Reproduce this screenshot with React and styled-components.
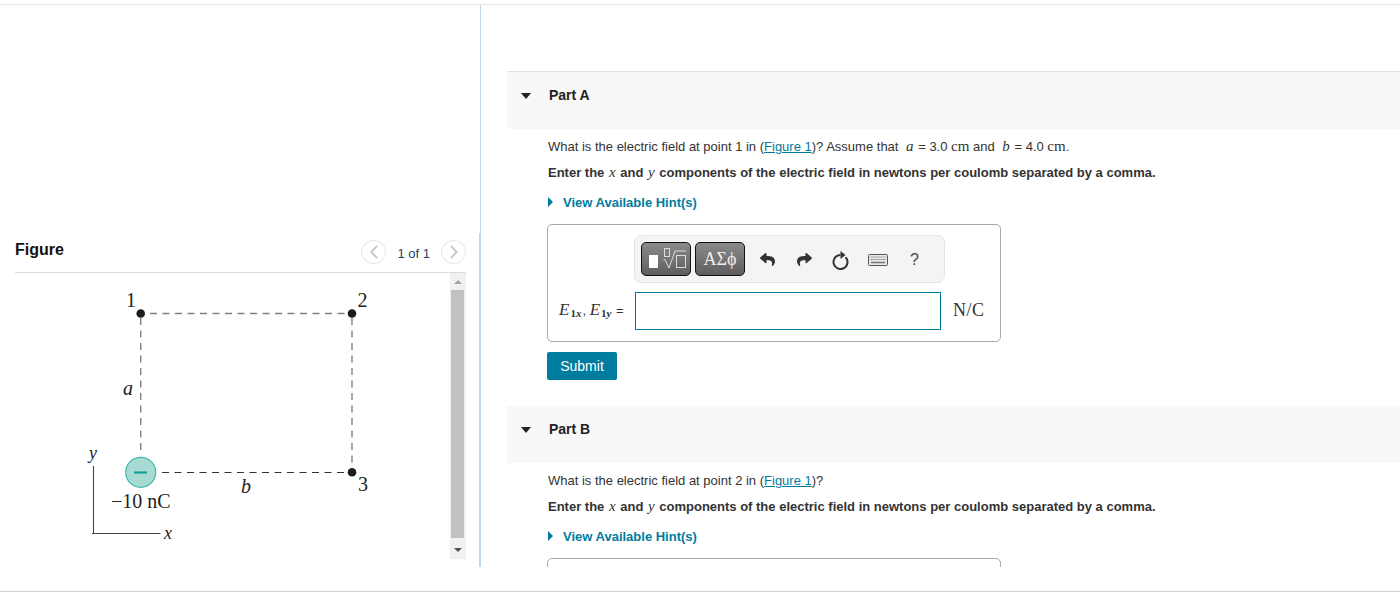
import React from 'react'
import styled, { createGlobalStyle } from 'styled-components'
import { FaReply, FaShare } from 'react-icons/fa'
import { FiChevronLeft, FiChevronRight } from 'react-icons/fi'

const GlobalStyle = createGlobalStyle`
	html, body {
		margin: 0;
		padding: 0;
		background: #fff;
		font-family: "Liberation Sans", Arial, sans-serif;
		color: #333;
	}
`
const Page = styled.div`
	width: 1400px;
	height: 595px;
	box-sizing: border-box;
	padding-top: 4px;
	overflow: hidden;
`
const Frame = styled.div`
	height: 588px;
	box-sizing: border-box;
	border-top: 1px solid #e6e6e6;
	border-bottom: 1px solid #d0d0d0;
`
const Columns = styled.div`
	display: flex;
	height: 562px;
`
const FigurePane = styled.aside`
	width: 481px;
	box-sizing: border-box;
	border-right: 1px solid #c3d7ec;
	display: flex;
	flex-direction: column;
	justify-content: flex-end;
`
const FigureCard = styled.div`
	box-sizing: border-box;
	border-right: 1px solid #c3d7ec;
	padding: 0 13px 8px 15px;
`
const FigureHeader = styled.div`
	height: 39px;
	display: flex;
	align-items: flex-start;
	border-bottom: 1px solid #dcdcdc;
`
const FigureTitle = styled.h2`
	margin: 7px 0 0;
	flex: 1;
	font-size: 16px;
	line-height: 20px;
	font-weight: 700;
	color: #111;
`
const Pager = styled.div`
	display: flex;
	align-items: center;
	gap: 11px;
	margin-top: 7px;
`
const PagerButton = styled.span`
	width: 23px;
	height: 22px;
	border: 1px solid #e8e8e8;
	border-radius: 50%;
	display: flex;
	align-items: center;
	justify-content: center;
	color: #c8c8c8;
	font-size: 22px;
`
const PagerText = styled.span`
	padding-top: 2px;
	font-size: 13px;
	color: #27405c;
`
const FigureBody = styled.div`
	height: 286px;
	display: flex;
`
const FigureCanvas = styled.div`
	flex: 1;
	min-width: 0;
`
const Scrollbar = styled.div`
	width: 16px;
	background: #f1f1f1;
	display: flex;
	flex-direction: column;
	align-items: center;
	padding-top: 7px;
	box-sizing: border-box;
`
const ScrollThumb = styled.div`
	align-self: flex-start;
	width: 13px;
	height: 248px;
	margin: 6px 0 10px 1px;
	background: #c1c1c1;
`
const ScrollArrow = styled.span`
	width: 0;
	height: 0;
	border-left: 4px solid transparent;
	border-right: 4px solid transparent;
	${p => (p.$up ? 'border-bottom: 4px solid #a3a3a3;' : 'border-top: 4px solid #505050;')}
`
const QuestionPane = styled.main`
	flex: 1;
	min-width: 0;
	height: 562px;
	overflow: hidden;
	padding: 66px 0 0 26px;
	box-sizing: border-box;
`
const PartHeader = styled.div`
	height: ${p => (p.$first ? '58px' : '57px')};
	box-sizing: border-box;
	background: #f8f8f8;
	${p => p.$first && 'border-top: 1px solid #e2e2e2;'}
	display: flex;
	align-items: flex-start;
	padding: 14px 0 0 14px;
`
const Caret = styled.span`
	width: 0;
	height: 0;
	margin: 7px 18px 0 0;
	border-left: 5.5px solid transparent;
	border-right: 5.5px solid transparent;
	border-top: 6px solid #222;
`
const PartTitle = styled.h3`
	margin: 0;
	font-size: 14px;
	line-height: 18px;
	font-weight: 700;
	color: #222;
`
const PartBody = styled.section`
	padding: 9px 0 26px 40px;
`
const Prompt = styled.p`
	margin: 0 0 8px;
	padding-left: 1px;
	font-size: 13px;
	line-height: 18px;
	height: 18px;
	font-weight: ${p => (p.$bold ? 700 : 400)};
	color: #333;
	white-space: nowrap;
`
const MathVar = styled.i`
	font-family: "Liberation Serif", serif;
	font-size: 15px;
	font-weight: 400;
	line-height: 0;
	padding: 0 1px;
	margin-left: ${p => p.$lead || 0}px;
`
const MathUnit = styled.span`
	font-family: "Liberation Serif", serif;
	font-size: 15px;
	line-height: 0;
`
const FigureLink = styled.a`
	color: #007c9e;
	text-decoration: underline;
`
const Hint = styled.div`
	display: flex;
	align-items: center;
	gap: 10px;
	margin: 11px 0 13px;
	padding-left: 1px;
	height: 18px;
	font-size: 13px;
	font-weight: 700;
	color: #007c9e;
`
const HintArrow = styled.span`
	width: 0;
	height: 0;
	border-top: 5px solid transparent;
	border-bottom: 5px solid transparent;
	border-left: 5px solid #007c9e;
`
const AnswerBox = styled.div`
	width: 454px;
	height: ${p => (p.$clipped ? '60px' : '118px')};
	box-sizing: border-box;
	border: 1px solid #a8a8a8;
	border-radius: 5px;
	padding: 10px 0 0 11px;
`
const ToolbarRow = styled.div`
	padding-left: 75px;
`
const Toolbar = styled.div`
	width: 311px;
	height: 48px;
	box-sizing: border-box;
	background: #f4f4f4;
	border: 1px solid #e4e4e4;
	border-radius: 7px;
	display: flex;
	align-items: center;
	padding-left: 6px;
`
const TemplateButton = styled.span`
	width: 50px;
	height: 34px;
	box-sizing: border-box;
	margin-right: 4px;
	border: 1px solid #111;
	border-radius: 5px;
	background: linear-gradient(#8a8a8a, #5e5e5e);
	color: #eee;
	display: flex;
	align-items: center;
	justify-content: center;
	font-family: "Liberation Serif", serif;
	font-size: 18px;
`
const ToolIcon = styled.span`
	width: ${p => p.$width || 37}px;
	padding-top: 1px;
	display: flex;
	align-items: center;
	justify-content: center;
	color: #333;
	font-size: 15px;
`
const HelpMark = styled(ToolIcon)`
	font-size: 16px;
	color: #444;
`
const InputRow = styled.div`
	display: flex;
	align-items: center;
	margin-top: 9px;
`
const InputLabel = styled.span`
	width: 76px;
	height: 20px;
	line-height: 20px;
	margin-bottom: 3px;
	box-sizing: border-box;
	font-size: 13px;
	color: #333;
	white-space: nowrap;
`
const LabelVar = styled.i`
	font-family: "Liberation Serif", serif;
	font-size: 17px;
`
const LabelSub = styled.span`
	font-family: "Liberation Serif", serif;
	font-size: 11px;
	font-weight: 700;
	margin: 0 1px;
	vertical-align: -2px;
	line-height: 0;
`
const AnswerInput = styled.div`
	width: 306px;
	height: 38px;
	box-sizing: border-box;
	border: 1px solid #007c9e;
`
const Units = styled.span`
	margin: 0 0 2px 12px;
	font-family: "Liberation Serif", serif;
	font-size: 18px;
	letter-spacing: 0.5px;
	color: #333;
`
const SubmitButton = styled.button`
	display: block;
	width: 70px;
	height: 28px;
	margin-top: 10px;
	padding: 0;
	border: 0;
	border-radius: 2px;
	background: #007c9e;
	color: #fff;
	font-family: inherit;
	font-size: 14px;
`

function FigureDrawing() {
	const labelFont = { fontFamily: '"Liberation Serif", serif', fill: '#222' }
	return (
		<svg width='435' height='286' viewBox='15 273 435 286'>
			<g stroke='#808080' strokeWidth='1.4' strokeDasharray='7 5.5' fill='none'>
				<path d='M150 313.5H346' />
				<path d='M140.7 318V451' />
				<path d='M352 318V467' />
				<path d='M162 472.5H346' strokeWidth='1' stroke='#333' />
			</g>
			<circle cx='140.7' cy='313.5' r='4.3' fill='#1c1c1c' />
			<circle cx='352' cy='313.5' r='4.3' fill='#1c1c1c' />
			<circle cx='352' cy='472.3' r='4.3' fill='#1c1c1c' />
			<circle cx='140.7' cy='472.3' r='15' fill='#a6dad2' stroke='#3fb8ac' strokeWidth='1.2' />
			<path d='M134 472.5H147' stroke='#17a096' strokeWidth='2.2' />
			<path d='M93.5 466V534M92 533.5H160.5' stroke='#444' strokeWidth='1.1' fill='none' />
			<g style={labelFont} fontSize='20'>
				<text x='126' y='307'>1</text>
				<text x='357.5' y='307'>2</text>
				<text x='358' y='491'>3</text>
				<text x='123' y='395' fontStyle='italic'>a</text>
				<text x='241' y='493' fontStyle='italic'>b</text>
				<text x='89' y='459' fontStyle='italic' fontSize='18'>y</text>
				<text x='164' y='539' fontStyle='italic' fontSize='18'>x</text>
				<text x='111' y='508'>−10 nC</text>
			</g>
		</svg>
	)
}

function RootButtonGlyph() {
	return (
		<svg width='48' height='32' viewBox='1 1 48 32' fill='none' stroke='#ddd'>
			<rect x='8' y='13' width='9' height='13' fill='#fff' stroke='none' />
			<rect x='23.5' y='6.5' width='5' height='8' />
			<path d='M22.5 18l1.5-0.5 4 8.5 6-17h11' />
			<rect x='35.5' y='13.5' width='9' height='12' />
		</svg>
	)
}

function ResetIcon() {
	return (
		<svg width='18' height='20' viewBox='0 0 18 20' fill='none'>
			<path d='M13.6 7.2A7 7 0 1 1 8.5 5' stroke='#333' strokeWidth='2' />
			<path d='M8.5 1L8.5 9L13.5 5z' fill='#333' />
		</svg>
	)
}

function KeyboardIcon() {
	return (
		<svg width='20' height='12' viewBox='0 0 20 12'>
			<rect x='0.5' y='0.5' width='19' height='11' rx='1' fill='#e8e8e8' stroke='#555' />
			<path d='M2.5 3h15M2.5 5.5h15' stroke='#666' strokeDasharray='1 1' />
			<path d='M3 8.5h14' stroke='#777' strokeWidth='1.5' />
		</svg>
	)
}

function MathToolbar() {
	return (
		<Toolbar>
			<TemplateButton>
				<RootButtonGlyph />
			</TemplateButton>
			<TemplateButton>ΑΣϕ</TemplateButton>
			<ToolIcon>
				<FaReply />
			</ToolIcon>
			<ToolIcon>
				<FaShare />
			</ToolIcon>
			<ToolIcon $width={36}>
				<ResetIcon />
			</ToolIcon>
			<ToolIcon>
				<KeyboardIcon />
			</ToolIcon>
			<HelpMark>?</HelpMark>
		</Toolbar>
	)
}

function Instruction() {
	return (
		<Prompt $bold>
			Enter the <MathVar>x</MathVar> and <MathVar>y</MathVar> components of the electric
			field in newtons per coulomb separated by a comma.
		</Prompt>
	)
}

function HintLink() {
	return (
		<Hint>
			<HintArrow />
			View Available Hint(s)
		</Hint>
	)
}

export default function App() {
	return (
		<Page>
			<GlobalStyle />
			<Frame>
				<Columns>
					<FigurePane>
						<FigureCard>
							<FigureHeader>
								<FigureTitle>Figure</FigureTitle>
								<Pager>
									<PagerButton>
										<FiChevronLeft />
									</PagerButton>
									<PagerText>1 of 1</PagerText>
									<PagerButton>
										<FiChevronRight />
									</PagerButton>
								</Pager>
							</FigureHeader>
							<FigureBody>
								<FigureCanvas>
									<FigureDrawing />
								</FigureCanvas>
								<Scrollbar>
									<ScrollArrow $up />
									<ScrollThumb />
									<ScrollArrow />
								</Scrollbar>
							</FigureBody>
						</FigureCard>
					</FigurePane>
					<QuestionPane>
						<PartHeader $first>
							<Caret />
							<PartTitle>Part A</PartTitle>
						</PartHeader>
						<PartBody>
							<Prompt>
								What is the electric field at point 1 in (<FigureLink>Figure 1</FigureLink>)?
								Assume that <MathVar $lead={3}>a</MathVar> = 3.0 <MathUnit>cm</MathUnit> and{' '}
								<MathVar $lead={3}>b</MathVar> = 4.0 <MathUnit>cm</MathUnit>.
							</Prompt>
							<Instruction />
							<HintLink />
							<AnswerBox>
								<ToolbarRow>
									<MathToolbar />
								</ToolbarRow>
								<InputRow>
									<InputLabel>
										<LabelVar>E</LabelVar>
										<LabelSub>
											1<i>x</i>
										</LabelSub>
										, <LabelVar>E</LabelVar>
										<LabelSub>
											1<i>y</i>
										</LabelSub>{' '}
										=
									</InputLabel>
									<AnswerInput />
									<Units>N/C</Units>
								</InputRow>
							</AnswerBox>
							<SubmitButton>Submit</SubmitButton>
						</PartBody>
						<PartHeader>
							<Caret />
							<PartTitle>Part B</PartTitle>
						</PartHeader>
						<PartBody>
							<Prompt>
								What is the electric field at point 2 in (<FigureLink>Figure 1</FigureLink>)?
							</Prompt>
							<Instruction />
							<HintLink />
							<AnswerBox $clipped />
						</PartBody>
					</QuestionPane>
				</Columns>
			</Frame>
		</Page>
	)
}
